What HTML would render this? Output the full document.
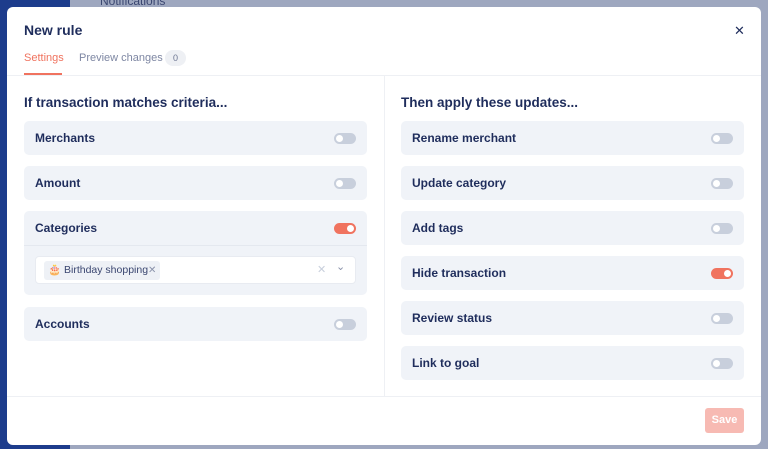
<!DOCTYPE html>
<html><head><style>
*{box-sizing:border-box;margin:0;padding:0}
body{width:768px;height:449px;overflow:hidden;background:#9ea7bf;font-family:"Liberation Sans",sans-serif;position:relative}
.strip{position:absolute;left:0;top:0;width:70px;height:449px;background:#1d3c8c}
.bgt{position:absolute;color:#3a4670;font-size:12px}
.modal{position:absolute;left:7px;top:7px;width:754px;height:438px;background:#fff;border-radius:6px}
.title{position:absolute;left:17px;top:15px;font-size:14px;font-weight:bold;color:#1f2d5c}
.close{position:absolute;left:727px;top:16px;font-size:13px;color:#1f2d5c}
.tab{position:absolute;top:45px;font-size:11px}
.sep{position:absolute;left:0;right:0;height:1px;background:#eef0f4}
.h{position:absolute;top:88px;font-size:13.5px;font-weight:bold;color:#1f2d5c}
.card{position:absolute;width:343px;height:34px;background:#f0f3f8;border-radius:5px}
.card span{position:absolute;left:11px;top:10px;font-size:12px;font-weight:bold;color:#1f2d5c}
.tg{position:absolute;right:11px;top:12px;width:22px;height:11px;border-radius:6px;background:#c8cfdc}
.tg:after{content:"";position:absolute;left:2px;top:2px;width:7px;height:7px;border-radius:50%;background:#fff}
.tg.on{background:#f0735f}.tg.on:after{left:13px}
</style></head><body>
<div class="strip"></div>
<div class="bgt" style="left:100px;top:-6px">Notifications</div>
<div class="modal">
<div class="title">New rule</div>
<div class="close">✕</div>
<div class="tab" style="left:17px;color:#f0735f">Settings</div>
<div style="position:absolute;left:17px;top:66px;width:38px;height:2px;background:#f0735f"></div>
<div class="tab" style="left:72px;color:#7e87a3">Preview changes</div>
<div style="position:absolute;left:158px;top:43px;width:21px;height:16px;border-radius:8px;background:#eef0f4;font-size:9px;color:#6c7591;text-align:center;line-height:16px">0</div>
<div class="sep" style="top:68px"></div>
<div style="position:absolute;left:377px;top:68px;width:1px;height:321px;background:#eef0f4"></div>
<div class="sep" style="top:389px"></div>
<div class="h" style="left:17px">If transaction matches criteria...</div>
<div class="h" style="left:394px">Then apply these updates...</div>
<div class="card" style="left:17px;top:114px"><span>Merchants</span><div class="tg"></div></div>
<div class="card" style="left:17px;top:159px"><span>Amount</span><div class="tg"></div></div>
<div class="card" style="left:17px;top:204px;height:84px"><span>Categories</span><div class="tg on"></div>
<div style="position:absolute;left:0;right:0;top:34px;height:1px;background:#e4e8ef"></div>
<div style="position:absolute;left:11px;top:45px;width:321px;height:28px;background:#fff;border-radius:4px;border:1px solid #e8ebf1">
<div style="position:absolute;left:8px;top:4px;width:116px;height:19px;background:#eef1f6;border-radius:3px;font-size:10.5px;color:#3a4670;line-height:19px;padding-left:4px;white-space:nowrap">🎂 Birthday shopping<b style="position:absolute;left:104px;top:0;font-weight:normal;color:#8a92aa;font-size:10px">✕</b></div>
<div style="position:absolute;left:281px;top:6px;font-size:11px;color:#c8cfdc">✕</div>
<div style="position:absolute;left:300px;top:3px;font-size:11px;color:#8a92aa">⌄</div>
</div></div>
<div class="card" style="left:17px;top:300px"><span>Accounts</span><div class="tg"></div></div>
<div class="card" style="left:394px;top:114px"><span>Rename merchant</span><div class="tg"></div></div>
<div class="card" style="left:394px;top:159px"><span>Update category</span><div class="tg"></div></div>
<div class="card" style="left:394px;top:204px"><span>Add tags</span><div class="tg"></div></div>
<div class="card" style="left:394px;top:249px"><span>Hide transaction</span><div class="tg on"></div></div>
<div class="card" style="left:394px;top:294px"><span>Review status</span><div class="tg"></div></div>
<div class="card" style="left:394px;top:339px"><span>Link to goal</span><div class="tg"></div></div>
<div style="position:absolute;left:698px;top:401px;width:39px;height:25px;background:#f7bab3;border-radius:3px;color:#fff;font-size:11px;font-weight:bold;text-align:center;line-height:25px">Save</div>
</div>
</body></html>
